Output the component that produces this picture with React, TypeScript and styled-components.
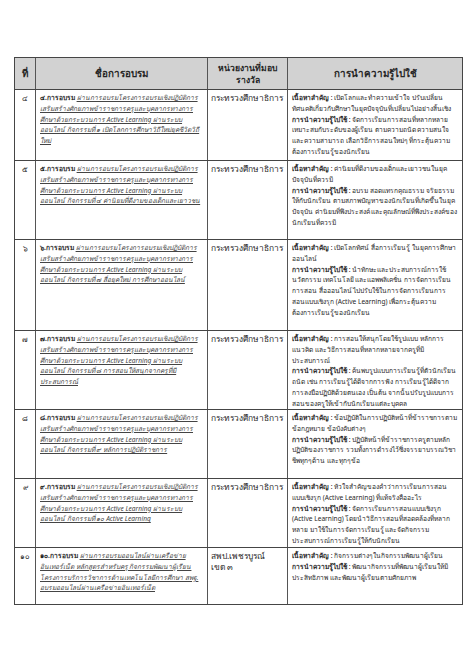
import styled, { createGlobalStyle } from 'styled-components';

const GlobalStyle = createGlobalStyle`
  html, body {
    margin: 0;
    padding: 0;
    background: #ffffff;
  }
  body {
    font-family: 'Noto Sans', 'DejaVu Sans', sans-serif;
    color: #2b2b2b;
  }
`;

interface Course {
  no: string;
  lead: string;
  title: string;
  agency: string[];
  content: string;
  usage: string;
  height: number;
}

const series =
  'ผ่านการอบรมโครงการอบรมเชิงปฏิบัติการเสริมสร้างศักยภาพข้าราชการครูและบุคลากรทางการศึกษาด้วยกระบวนการ Active Learning ผ่านระบบออนไลน์ กิจกรรมที่ ';

const ministry = ['กระทรวงศึกษาธิการ'];

const courses: Course[] = [
  {
    no: '๔',
    lead: '๔.การอบรม',
    title: series + '๑ เปิดโลกการศึกษาวิถีใหม่ยุคชีวิตวิถีใหม่',
    agency: ministry,
    content: 'เปิดโลกและทำความเข้าใจ ปรับเปลี่ยนทัศนคติเกี่ยวกับศึกษาในยุคปัจจุบันที่เปลี่ยนไปอย่างสิ้นเชิง',
    usage:
      'จัดการเรียนการสอนที่หลากหลาย เหมาะสมกับระดับของผู้เรียน ตามความถนัด ความสนใจ และความสามารถ เลือกวิธีการสอนใหม่ๆ ที่กระตุ้นความต้องการเรียนรู้ของนักเรียน',
    height: 71,
  },
  {
    no: '๕',
    lead: '๕.การอบรม',
    title: series + '๔ ค่านิยมที่ดีงามของเด็กและเยาวชน',
    agency: ministry,
    content: 'ค่านิยมที่ดีงามของเด็กและเยาวชนในยุคปัจจุบันที่ควรมี',
    usage:
      'อบรม สอดแทรกคุณธรรม จริยธรรม ให้กับนักเรียน ตามสภาพปัญหาของนักเรียนที่เกิดขึ้นในยุคปัจจุบัน ค่านิยมที่พึงประสงค์ และคุณลักษณ์ที่พึงประสงค์ของนักเรียนที่ควรมี',
    height: 79,
  },
  {
    no: '๖',
    lead: '๖.การอบรม',
    title: series + '๗ สื่อยุคใหม่ การศึกษาออนไลน์',
    agency: ministry,
    content: 'เปิดโลกทัศน์ สื่อการเรียนรู้ ในยุคการศึกษาออนไลน์',
    usage:
      'นำทักษะและประสบการณ์การใช้นวัตกรรม เทคโนโลยี และแอพพลิเคชั่น การจัดการเรียนการสอน สื่อออนไลน์ ไปปรับใช้ในการจัดการเรียนการสอนแบบเชิงรุก (Active Learning) เพื่อกระตุ้นความต้องการเรียนรู้ของนักเรียน',
    height: 91,
  },
  {
    no: '๗',
    lead: '๗.การอบรม',
    title: series + '๘ การสอนให้สนุกจากครูที่มีประสบการณ์',
    agency: ministry,
    content: 'การสอนให้สนุกโดยใช้รูปแบบ หลักการ แนวคิด และวิธีการสอนที่หลากหลายจากครูที่มีประสบการณ์',
    usage:
      'ค้นพบรูปแบบการเรียนรู้ที่ตัวนักเรียนถนัด เช่น การเรียนรู้ได้ดีจากการฟัง การเรียนรู้ได้ดีจากการลงมือปฏิบัติด้วยตนเอง เป็นต้น จากนั้นปรับรูปแบบการสอนของครูให้เข้ากับนักเรียนแต่ละบุคคล',
    height: 79,
  },
  {
    no: '๘',
    lead: '๘.การอบรม',
    title: series + '๙ หลักการปฏิบัติราชการ',
    agency: ministry,
    content: 'ข้อปฏิบัติในการปฏิบัติหน้าที่ข้าราชการตามข้อกฎหมาย ข้อบังคับต่างๆ',
    usage:
      'ปฏิบัติหน้าที่ข้าราชการครูตามหลักปฏิบัติของราชการ รวมทั้งการดำรงไว้ซึ่งจรรยาบรรณวิชาชีพทุกๆด้าน และทุกๆข้อ',
    height: 69,
  },
  {
    no: '๙',
    lead: '๙.การอบรม',
    title: series + '๑๐ Active Learning',
    agency: ministry,
    content: 'หัวใจสำคัญของคำว่าการเรียนการสอนแบบเชิงรุก (Active Learning) ที่แท้จริงคืออะไร',
    usage:
      'จัดการเรียนการสอนแบบเชิงรุก (Active Learning) โดยนำวิธีการสอนที่สอดคล้องที่หลากหลาย มาใช้ในการจัดการเรียนรู้ และจัดกิจกรรมประสบการณ์การเรียนรู้ให้กับนักเรียน',
    height: 69,
  },
  {
    no: '๑๐',
    lead: '๑๐.การอบรม',
    title:
      'ผ่านการอบรมออนไลน์ผ่านเครือข่ายอินเทอร์เน็ต หลักสูตรสำหรับครู กิจกรรมพัฒนาผู้เรียน โครงการบริการวิชาการด้านเทคโนโลยีการศึกษา สพฐ. อบรมออนไลน์ผ่านเครือข่ายอินเทอร์เน็ต',
    agency: ['สพป.เพชรบูรณ์', 'เขต ๓'],
    content: 'กิจกรรมต่างๆในกิจกรรมพัฒนาผู้เรียน',
    usage: 'พัฒนากิจกรรมที่พัฒนาผู้เรียนให้มีประสิทธิภาพ และพัฒนาผู้เรียนตามศักยภาพ',
    height: 57,
  },
];

function App() {
  return (
    <>
      <GlobalStyle />
      <Page>
        <Table>
          <Row $h={32} $head>
            <HeadCell>ที่</HeadCell>
            <HeadCell>ชื่อการอบรม</HeadCell>
            <HeadCell $small>
              หน่วยงานที่มอบ
              <br />
              รางวัล
            </HeadCell>
            <HeadCell>การนำความรู้ไปใช้</HeadCell>
          </Row>
          {courses.map((c) => (
            <Row key={c.no} $h={c.height}>
              <NoCell>{c.no}</NoCell>
              <Cell>
                <Lead>{c.lead}</Lead> <Title>{c.title}</Title>
              </Cell>
              <AgencyCell>
                {c.agency.map((a) => (
                  <div key={a}>{a}</div>
                ))}
              </AgencyCell>
              <Cell>
                <Para>
                  <Label>เนื้อหาสำคัญ</Label> : {c.content}
                </Para>
                <Para>
                  <Label>การนำความรู้ไปใช้</Label> : {c.usage}
                </Para>
              </Cell>
            </Row>
          ))}
        </Table>
      </Page>
    </>
  );
}

export default App;

const Page = styled.div`
  width: 474px;
  height: 670px;
  box-sizing: border-box;
  padding: 57px 0 0 14px;
  background: #ffffff;
  overflow: hidden;
`;

const Table = styled.div`
  width: 449px;
  border: 1px solid #454545;
  border-bottom: none;
  box-sizing: border-box;
`;

const Row = styled.div<{ $h: number; $head?: boolean }>`
  display: grid;
  grid-template-columns: 21px 172px 80px 1fr;
  height: ${(p) => p.$h}px;
  border-bottom: 1px solid #454545;
  background: ${(p) => (p.$head ? '#d2d2d2' : '#ffffff')};
  box-sizing: border-box;
`;

const Cell = styled.div`
  padding: 3px 3px 1px 4px;
  border-right: 1px solid #555555;
  font-size: 6.6px;
  line-height: 10.8px;
  color: #262626;
  overflow: hidden;
  &:last-child {
    border-right: none;
  }
`;

const NoCell = styled(Cell)`
  text-align: center;
  padding: 3px 0;
  font-size: 7.5px;
`;

const AgencyCell = styled(Cell)`
  font-size: 8.4px;
  line-height: 11px;
  padding: 2px 2px 1px 3px;
  white-space: nowrap;
`;

const HeadCell = styled.div<{ $small?: boolean }>`
  display: flex;
  align-items: center;
  justify-content: center;
  text-align: center;
  font-weight: 700;
  font-size: ${(p) => (p.$small ? '8.6px' : '9.8px')};
  line-height: ${(p) => (p.$small ? '12px' : '14px')};
  color: #262626;
  border-right: 1px solid #555555;
  &:last-child {
    border-right: none;
  }
`;

const Lead = styled.span`
  font-weight: 700;
`;

const Title = styled.span`
  text-decoration: underline;
  text-underline-offset: 1px;
  font-style: italic;
  color: #444444;
`;

const Para = styled.div`
  margin: 0;
`;

const Label = styled.span`
  font-weight: 700;
`;
